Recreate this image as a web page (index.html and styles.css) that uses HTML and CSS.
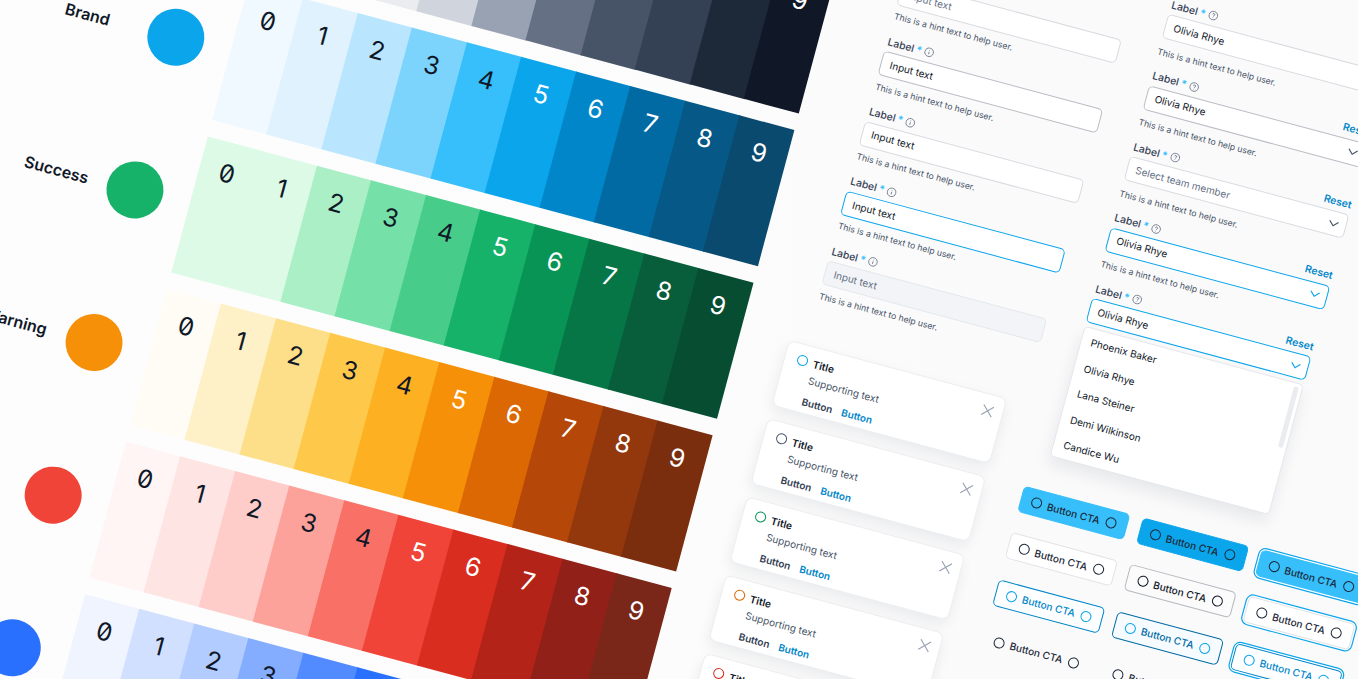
FILE: index.html
```html
<!DOCTYPE html>
<html lang="en">
<head>
<meta charset="utf-8">
<title>Design system overview</title>
<link rel="stylesheet" href="styles.css">
</head>
<body>
<svg class="defs" aria-hidden="true">
  <symbol id="i-info" viewBox="0 0 10 10"><circle cx="5" cy="5" r="4.3" fill="none" stroke="currentColor" stroke-width=".8"/><path d="M5 4.5v2.6M5 2.8v.6" fill="none" stroke="currentColor" stroke-width=".8"/></symbol>
  <symbol id="i-help" viewBox="0 0 10 10"><circle cx="5" cy="5" r="4.3" fill="none" stroke="currentColor" stroke-width=".8"/><path d="M3.8 4c.1-.7.6-1.1 1.3-1.1s1.2.5 1.2 1.1c0 .9-1.3 1-1.3 1.9M5 6.9v.5" fill="none" stroke="currentColor" stroke-width=".8"/></symbol>
  <symbol id="i-chev" viewBox="0 0 12 8"><path d="M1.5 1.5 6 6l4.5-4.5" fill="none" stroke="currentColor" stroke-width="1.2"/></symbol>
  <symbol id="i-x" viewBox="0 0 12 12"><path d="M1 1l10 10M11 1 1 11" fill="none" stroke="currentColor" stroke-width="1.1"/></symbol>
</svg>
<main class="canvas">
  <section class="palettes">
    <div class="palette gray">
      <span class="pal-name"></span><span class="dot"></span>
      <div class="swatches"><div>0</div><div>1</div><div>2</div><div>3</div><div>4</div><div>5</div><div>6</div><div>7</div><div>8</div><div>9</div></div>
    </div>
    <div class="palette brand">
      <span class="pal-name">Brand</span><span class="dot"></span>
      <div class="swatches"><div>0</div><div>1</div><div>2</div><div>3</div><div>4</div><div>5</div><div>6</div><div>7</div><div>8</div><div>9</div></div>
    </div>
    <div class="palette success">
      <span class="pal-name">Success</span><span class="dot"></span>
      <div class="swatches"><div>0</div><div>1</div><div>2</div><div>3</div><div>4</div><div>5</div><div>6</div><div>7</div><div>8</div><div>9</div></div>
    </div>
    <div class="palette warning">
      <span class="pal-name">Warning</span><span class="dot"></span>
      <div class="swatches"><div>0</div><div>1</div><div>2</div><div>3</div><div>4</div><div>5</div><div>6</div><div>7</div><div>8</div><div>9</div></div>
    </div>
    <div class="palette error">
      <span class="pal-name">Error</span><span class="dot"></span>
      <div class="swatches"><div>0</div><div>1</div><div>2</div><div>3</div><div>4</div><div>5</div><div>6</div><div>7</div><div>8</div><div>9</div></div>
    </div>
    <div class="palette blue">
      <span class="pal-name">Blue</span><span class="dot"></span>
      <div class="swatches"><div>0</div><div>1</div><div>2</div><div>3</div><div>4</div><div>5</div><div>6</div><div>7</div><div>8</div><div>9</div></div>
    </div>
  </section>

  <section class="stack-left">
    <div class="fields fields-text">
      <div class="field">
        <div class="label-row"><span class="label">Label<b>*</b><svg class="tip"><use href="#i-info"/></svg></span></div>
        <div class="input is-placeholder">Input text</div>
        <p class="hint">This is a hint text to help user.</p>
      </div>
      <div class="field">
        <div class="label-row"><span class="label">Label<b>*</b><svg class="tip"><use href="#i-info"/></svg></span></div>
        <div class="input is-hover">Input text</div>
        <p class="hint">This is a hint text to help user.</p>
      </div>
      <div class="field">
        <div class="label-row"><span class="label">Label<b>*</b><svg class="tip"><use href="#i-info"/></svg></span></div>
        <div class="input">Input text</div>
        <p class="hint">This is a hint text to help user.</p>
      </div>
      <div class="field">
        <div class="label-row"><span class="label">Label<b>*</b><svg class="tip"><use href="#i-info"/></svg></span></div>
        <div class="input is-focus">Input text</div>
        <p class="hint">This is a hint text to help user.</p>
      </div>
      <div class="field">
        <div class="label-row"><span class="label">Label<b>*</b><svg class="tip"><use href="#i-info"/></svg></span></div>
        <div class="input is-disabled">Input text</div>
        <p class="hint">This is a hint text to help user.</p>
      </div>
    </div>

    <div class="alerts">
      <article class="alert a-blue">
        <span class="ring"></span>
        <div class="alert-body"><h3>Title</h3><p>Supporting text</p><div class="alert-actions"><span>Button</span><span class="link">Button</span></div></div>
        <svg class="close"><use href="#i-x"/></svg>
      </article>
      <article class="alert a-gray">
        <span class="ring"></span>
        <div class="alert-body"><h3>Title</h3><p>Supporting text</p><div class="alert-actions"><span>Button</span><span class="link">Button</span></div></div>
        <svg class="close"><use href="#i-x"/></svg>
      </article>
      <article class="alert a-green">
        <span class="ring"></span>
        <div class="alert-body"><h3>Title</h3><p>Supporting text</p><div class="alert-actions"><span>Button</span><span class="link">Button</span></div></div>
        <svg class="close"><use href="#i-x"/></svg>
      </article>
      <article class="alert a-orange">
        <span class="ring"></span>
        <div class="alert-body"><h3>Title</h3><p>Supporting text</p><div class="alert-actions"><span>Button</span><span class="link">Button</span></div></div>
        <svg class="close"><use href="#i-x"/></svg>
      </article>
      <article class="alert a-red">
        <span class="ring"></span>
        <div class="alert-body"><h3>Title</h3><p>Supporting text</p><div class="alert-actions"><span>Button</span><span class="link">Button</span></div></div>
        <svg class="close"><use href="#i-x"/></svg>
      </article>
    </div>
  </section>

  <section class="stack-right">
    <div class="fields fields-select">
      <div class="field">
        <div class="label-row"><span class="label">Label<b>*</b><svg class="tip"><use href="#i-help"/></svg></span><span class="reset">Reset</span></div>
        <div class="input">Olivia Rhye<svg class="chev"><use href="#i-chev"/></svg></div>
        <p class="hint">This is a hint text to help user.</p>
      </div>
      <div class="field">
        <div class="label-row"><span class="label">Label<b>*</b><svg class="tip"><use href="#i-help"/></svg></span><span class="reset">Reset</span></div>
        <div class="input is-hover">Olivia Rhye<svg class="chev"><use href="#i-chev"/></svg></div>
        <p class="hint">This is a hint text to help user.</p>
      </div>
      <div class="field">
        <div class="label-row"><span class="label">Label<b>*</b><svg class="tip"><use href="#i-help"/></svg></span><span class="reset">Reset</span></div>
        <div class="input is-placeholder">Select team member<svg class="chev"><use href="#i-chev"/></svg></div>
        <p class="hint">This is a hint text to help user.</p>
      </div>
      <div class="field">
        <div class="label-row"><span class="label">Label<b>*</b><svg class="tip"><use href="#i-help"/></svg></span><span class="reset">Reset</span></div>
        <div class="input is-focus">Olivia Rhye<svg class="chev"><use href="#i-chev"/></svg></div>
        <p class="hint">This is a hint text to help user.</p>
      </div>
      <div class="field">
        <div class="label-row"><span class="label">Label<b>*</b><svg class="tip"><use href="#i-help"/></svg></span><span class="reset">Reset</span></div>
        <div class="input is-focus">Olivia Rhye<svg class="chev"><use href="#i-chev"/></svg></div>
        <ul class="menu">
          <li>Phoenix Baker</li>
          <li>Olivia Rhye</li>
          <li>Lana Steiner</li>
          <li>Demi Wilkinson</li>
          <li>Candice Wu</li>
        </ul>
      </div>
    </div>

    <div class="buttons">
      <div class="btn b-primary"><i></i>Button CTA<i></i></div>
      <div class="btn b-primary-strong"><i></i>Button CTA<i></i></div>
      <div class="btn b-primary b-ring"><i></i>Button CTA<i></i></div>
      <div class="btn b-secondary"><i></i>Button CTA<i></i></div>
      <div class="btn b-secondary-strong"><i></i>Button CTA<i></i></div>
      <div class="btn b-secondary b-ring"><i></i>Button CTA<i></i></div>
      <div class="btn b-outline"><i></i>Button CTA<i></i></div>
      <div class="btn b-outline b-tint"><i></i>Button CTA<i></i></div>
      <div class="btn b-outline b-ring"><i></i>Button CTA<i></i></div>
      <div class="btn"><i></i>Button CTA<i></i></div>
      <div class="btn"><i></i>Button CTA<i></i></div>
      <div class="btn"><i></i>Button CTA<i></i></div>
    </div>
  </section>
</main>
</body>
</html>
```

FILE: styles.css
```css
* { box-sizing: border-box; }
html, body { height: 100%; }
body {
  margin: 0;
  overflow: hidden;
  background: linear-gradient(90deg, #fdfdfd 0, #fcfcfc 50%, #fafafb 75%);
  font-family: Inter, "Noto Sans", sans-serif;
  color: #101828;
}
.defs { position: absolute; width: 0; height: 0; }

/* The whole board is a free canvas turned by 15 degrees */
.canvas {
  position: absolute;
  top: 0;
  left: 0;
  width: 1700px;
  height: 1400px;
  display: flex;
  align-items: flex-start;
  padding-left: 65px;
  transform-origin: 0 0;
  transform: rotate(15deg) translateY(-340px);
}

/* Palettes */
.palettes {
  flex: none;
  width: 736px;
  margin-top: 102.3px;
  display: flex;
  flex-direction: column;
  gap: 16.9px;
}
.palette { display: flex; align-items: center; height: 141px; }
.pal-name { flex: none; width: 85.5px; padding-left: .5px; font-size: 16px; font-weight: 600; line-height: 20px; color: #101828; }
.dot { flex: none; width: 57px; height: 57px; border-radius: 50%; margin-right: 28px; }
.swatches { flex: none; width: 565.5px; height: 141px; display: grid; grid-template-columns: repeat(10, 1fr); }
.swatches div {
  margin-right: -1px;
  padding-top: 19px;
  text-align: center;
  font-size: 25px;
  line-height: 25px;
  font-feature-settings: "zero" 1;
  color: #101828;
}
.swatches div:last-child { margin-right: 0; }
.swatches div:nth-child(n+6) { color: #fff; }

.gray .swatches div:nth-child(1) { background: #f9fafb; }
.gray .swatches div:nth-child(2) { background: #f2f4f7; }
.gray .swatches div:nth-child(3) { background: #eaecf0; }
.gray .swatches div:nth-child(4) { background: #d0d5dd; }
.gray .swatches div:nth-child(5) { background: #98a2b3; }
.gray .swatches div:nth-child(6) { background: #667085; }
.gray .swatches div:nth-child(7) { background: #475467; }
.gray .swatches div:nth-child(8) { background: #344054; }
.gray .swatches div:nth-child(9) { background: #1d2939; }
.gray .swatches div:nth-child(10) { background: #101828; }
.gray .dot { background: #667085; }

.brand .swatches div:nth-child(1) { background: #f0f9ff; }
.brand .swatches div:nth-child(2) { background: #e0f2fe; }
.brand .swatches div:nth-child(3) { background: #b9e6fe; }
.brand .swatches div:nth-child(4) { background: #7cd4fd; }
.brand .swatches div:nth-child(5) { background: #36bffa; }
.brand .swatches div:nth-child(6) { background: #0ba5ec; }
.brand .swatches div:nth-child(7) { background: #0086c9; }
.brand .swatches div:nth-child(8) { background: #026aa2; }
.brand .swatches div:nth-child(9) { background: #065986; }
.brand .swatches div:nth-child(10) { background: #0b4a6f; }
.brand .dot { background: #0ba5ec; }

.success .swatches div:nth-child(1) { background: #dcfae6; }
.success .swatches div:nth-child(2) { background: #dcfae6; }
.success .swatches div:nth-child(3) { background: #abefc6; }
.success .swatches div:nth-child(4) { background: #75e0a7; }
.success .swatches div:nth-child(5) { background: #47cd89; }
.success .swatches div:nth-child(6) { background: #17b26a; }
.success .swatches div:nth-child(7) { background: #079455; }
.success .swatches div:nth-child(8) { background: #067647; }
.success .swatches div:nth-child(9) { background: #085d3a; }
.success .swatches div:nth-child(10) { background: #074d31; }
.success .dot { background: #17b26a; }

.warning .swatches div:nth-child(1) { background: #fffcf5; }
.warning .swatches div:nth-child(2) { background: #fef0c7; }
.warning .swatches div:nth-child(3) { background: #fedf89; }
.warning .swatches div:nth-child(4) { background: #fec84b; }
.warning .swatches div:nth-child(5) { background: #fdb022; }
.warning .swatches div:nth-child(6) { background: #f79009; }
.warning .swatches div:nth-child(7) { background: #dc6803; }
.warning .swatches div:nth-child(8) { background: #b54708; }
.warning .swatches div:nth-child(9) { background: #93370d; }
.warning .swatches div:nth-child(10) { background: #7a2e0e; }
.warning .dot { background: #f79009; }

.error .swatches div:nth-child(1) { background: #fff5f4; }
.error .swatches div:nth-child(2) { background: #fee4e2; }
.error .swatches div:nth-child(3) { background: #fecdca; }
.error .swatches div:nth-child(4) { background: #fda29b; }
.error .swatches div:nth-child(5) { background: #f97066; }
.error .swatches div:nth-child(6) { background: #f04438; }
.error .swatches div:nth-child(7) { background: #d92d20; }
.error .swatches div:nth-child(8) { background: #b42318; }
.error .swatches div:nth-child(9) { background: #912018; }
.error .swatches div:nth-child(10) { background: #7a271a; }
.error .dot { background: #f04438; }

.blue .swatches div:nth-child(1) { background: #eff4ff; }
.blue .swatches div:nth-child(2) { background: #d1e0ff; }
.blue .swatches div:nth-child(3) { background: #b2ccff; }
.blue .swatches div:nth-child(4) { background: #84adff; }
.blue .swatches div:nth-child(5) { background: #528bff; }
.blue .swatches div:nth-child(6) { background: #2970ff; }
.blue .swatches div:nth-child(7) { background: #155eef; }
.blue .swatches div:nth-child(8) { background: #004eeb; }
.blue .swatches div:nth-child(9) { background: #0040c1; }
.blue .swatches div:nth-child(10) { background: #00359e; }
.blue .dot { background: #2970ff; }

/* Columns to the right of the palettes */
.stack-left { flex: none; width: 265.5px; margin-left: 48.5px; margin-top: 71px; }
.stack-right { flex: none; width: 500px; margin-top: 34px; }

.fields { display: flex; flex-direction: column; }
.fields-text { width: 244.5px; padding-left: 17.5px; gap: 12.9px; }
.fields-select { width: 243.5px; padding-left: 16.5px; gap: 12px; }

.field { position: relative; }
.label-row { display: flex; justify-content: space-between; align-items: center; height: 14px; margin-bottom: 3px; padding-left: 1.5px; }
.label { display: inline-flex; align-items: center; gap: 2.5px; font-size: 10.4px; font-weight: 500; color: #344054; }
.label b { font-weight: 600; color: #36bffa; }
.tip { width: 10px; height: 10px; color: #667085; }
.reset { font-size: 10.4px; font-weight: 600; color: #0086c9; }

.input {
  display: flex;
  align-items: center;
  justify-content: space-between;
  height: 25px;
  padding: 0 6px 1.5px 8.5px;
  background: #fff;
  border: 1px solid #d8dbe0;
  border-radius: 5px;
  font-size: 10px;
  color: #101828;
}
.input.is-placeholder { color: #667085; }
.input.is-hover { border-color: #b9bdc4; border-width: 1.3px; }
.input.is-focus { border: 1.8px solid #0ba5ec; }
.input.is-disabled { background: #f2f4f7; border-color: #e4e7ec; color: #667085; }
.chev { width: 12px; height: 8px; margin-top: 1.5px; color: #475467; }
.is-focus .chev { color: #0ba5ec; }

.hint { margin: 5.4px 0 0; padding-left: 1px; height: 12px; font-size: 8.7px; line-height: 12px; color: #475467; white-space: nowrap; }
.fields-select .hint { margin-top: 7.5px; padding-left: 0; }

.menu {
  position: absolute;
  top: 45.7px;
  left: 0;
  right: 0;
  z-index: 2;
  height: 135.5px;
  margin: 0;
  padding: .5px 0 0 10px;
  list-style: none;
  background: #fff;
  border: 1px solid #e4e7ec;
  border-radius: 5px;
  box-shadow: 0 8px 16px rgba(16, 24, 40, .08);
  font-size: 10px;
  color: #101828;
}
.menu li { height: 26.5px; line-height: 26.5px; }
.menu::after {
  content: "";
  position: absolute;
  top: 3.5px;
  right: 3px;
  width: 5px;
  height: 63px;
  border-radius: 3px;
  background: #eaecf0;
}

/* Alerts */
.alerts { display: flex; flex-direction: column; gap: 13px; margin-top: 44.6px; }
.alert {
  display: flex;
  align-items: flex-start;
  width: 226.5px;
  height: 68px;
  padding: 10px 8.5px 0 12px;
  background: #fff;
  border: 1px solid #eceef1;
  border-radius: 7px;
  box-shadow: 0 6px 14px rgba(16, 24, 40, .07);
}
.ring { flex: none; width: 11px; height: 11px; margin-right: 6px; border: 1.2px solid; border-radius: 50%; }
.a-blue .ring { border-color: #0ba5ec; }
.a-gray .ring { border-color: #475467; }
.a-green .ring { border-color: #079455; }
.a-orange .ring { border-color: #dc6803; }
.a-red .ring { border-color: #d92d20; }
.alert-body { flex: 1; }
.alert h3 { margin: 0; font-size: 10.2px; line-height: 12px; font-weight: 600; color: #101828; }
.alert p { margin: 5.3px 0 0; font-size: 10px; line-height: 12px; color: #475467; white-space: nowrap; }
.alert-actions { display: flex; gap: 9.5px; margin: 10px 0 0 -1px; font-size: 10px; line-height: 12px; font-weight: 600; color: #344054; }
.alert-actions .link { color: #0086c9; }
.close { flex: none; width: 12.5px; height: 12.5px; color: #98a2b3; }

/* Buttons */
.buttons {
  display: grid;
  grid-template-columns: repeat(3, 110px);
  grid-auto-rows: 27px;
  column-gap: 13px;
  row-gap: 21.3px;
  margin-top: 174px;
}
.btn {
  display: flex;
  align-items: center;
  justify-content: space-between;
  padding: 0 10px 0 9.5px;
  border: 1.2px solid transparent;
  border-radius: 5px;
  font-size: 10.1px;
  font-weight: 500;
  color: #1d2939;
  white-space: nowrap;
}
.btn i { flex: none; width: 11px; height: 11px; border: 1.1px solid currentColor; border-radius: 50%; }
.b-primary { background: #36bffa; border-color: #36bffa; }
.b-primary-strong { background: #0ba5ec; border-color: #0ba5ec; }
.b-secondary { background: #fff; border-color: #e1e3e7; }
.b-secondary-strong { background: #fbfbfb; border-color: #b4b8bf; color: #101828; }
.b-outline { background: #fdfeff; border-color: #0086c9; color: #0086c9; }
.b-outline i { color: #0ba5ec; }
.b-tint { background: #f5fbff; border-color: #026aa2; color: #026aa2; }
.b-ring { box-shadow: 0 0 0 1.2px #fff, 0 0 0 2.4px #0ba5ec; }
```
